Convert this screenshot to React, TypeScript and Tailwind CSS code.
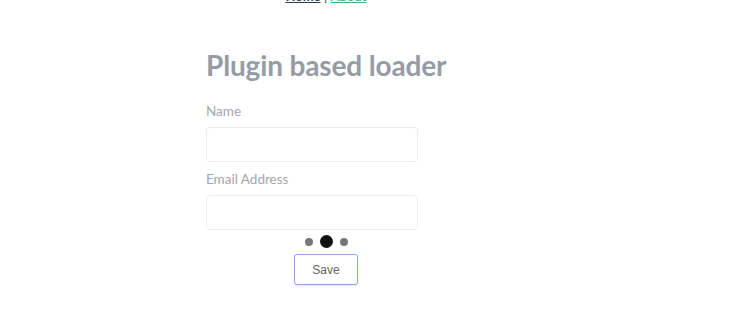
export default function App() {
  return (
    <div className="min-h-[333px] w-full bg-white font-['Lato',sans-serif]">
      <div className="ml-[206px] w-[240px] pb-10">
        {/* nav, page is scrolled so only its bottom shows */}
        <nav className="-mt-[11px] text-center text-[13px] leading-[15px] text-[#2c3e50]">
          <a className="font-bold underline text-[#2c3e50]">Home</a>
          <span> | </span>
          <a className="font-bold underline text-[#42b983]">About</a>
        </nav>

        <h1 className="mt-[43px] text-[28px] font-bold leading-[36px] tracking-[-0.15px] text-[#959ca6] whitespace-nowrap">
          Plugin based loader
        </h1>

        <form className="mt-[19px]">
          <label className="block text-[13.5px] leading-[18px] text-[#a3a7ae]">Name</label>
          <input
            type="text"
            className="mt-[7px] block h-[35px] w-[212px] rounded-[4px] border border-[#ececec] outline-none"
          />
          <label className="mt-[8px] block text-[13.5px] leading-[18px] text-[#a3a7ae]">Email Address</label>
          <input
            type="email"
            className="mt-[7px] block h-[35px] w-[212px] rounded-[4px] border border-[#ececec] outline-none"
          />

          <div className="mt-[5px] flex items-center justify-center gap-[7px]">
            <span className="h-[8px] w-[8px] rounded-full bg-[#777777]" />
            <span className="h-[13px] w-[13px] rounded-full bg-[#111111]" />
            <span className="h-[8px] w-[8px] rounded-full bg-[#777777]" />
          </div>

          <div className="mt-[6px] flex justify-center">
            <button
              type="button"
              className="h-[31px] w-[64px] rounded-[3px] border border-[#8fa9e0] bg-white font-['Liberation_Sans',sans-serif] text-[12px] text-[#666] shadow-[0_1px_2px_rgba(0,0,0,0.12)]"
            >
              Save
            </button>
          </div>
        </form>
      </div>
    </div>
  );
}
